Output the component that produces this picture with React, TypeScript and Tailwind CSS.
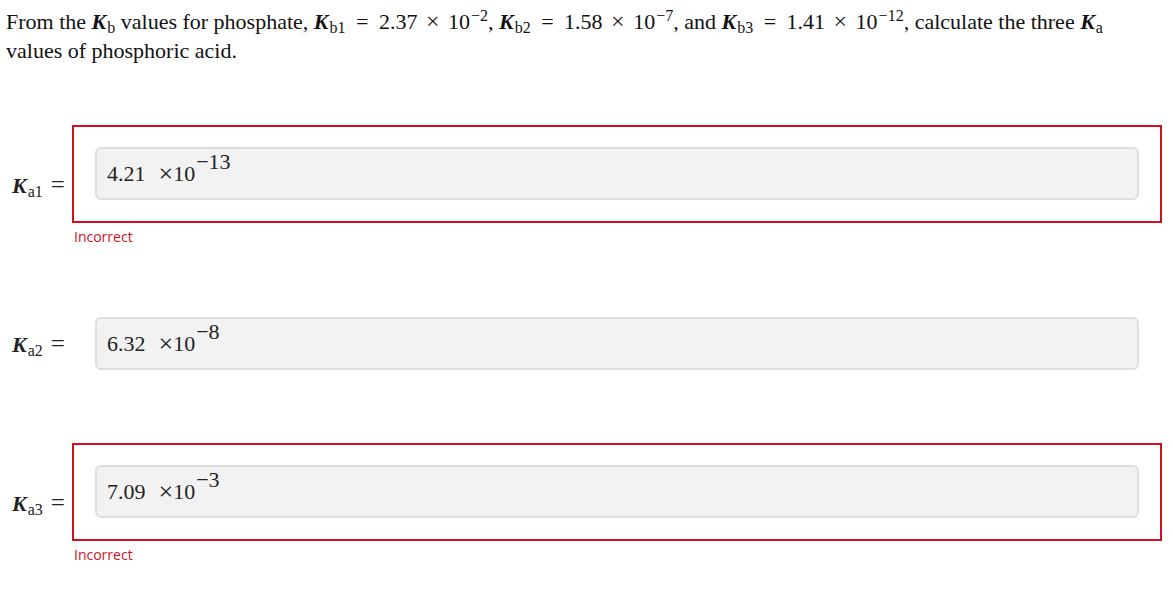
import React from 'react';

const serif = { fontFamily: '"Liberation Serif", "Times New Roman", serif' };

const K = ({ sub }: { sub: string }) => (
  <span className="whitespace-nowrap">
    <span className="font-bold italic">K</span>
    <sub className="ml-[1px] text-[16px]">{sub}</sub>
  </span>
);

const Eq = () => <span className="mx-[5px]">=</span>;
const Times = () => <span className="mx-[3px] text-[24px] leading-none">×</span>;

const Answer: React.FC<{ label: string; value: string; exp: string; wrong?: boolean }> = ({ label, value, exp, wrong }) => (
  <div className="flex items-center">
    <div className="w-[72px] shrink-0 pl-[12px] text-[22px] text-[#222]" style={serif}>
      <K sub={label} />
      <span className="ml-[8px] text-[25px] leading-none">=</span>
    </div>
    <div className="mr-[11px] flex-1">
      <div className={`border-2 px-[21px] pt-[20px] pb-[21px] ${wrong ? 'border-[#d0101e]' : 'border-transparent'}`}>
        <div className="flex h-[53px] items-center rounded-md border-2 border-[#dedede] bg-[#f2f2f2] pl-[10px] text-[22px] text-[#222]" style={serif}>
          <span>{value}</span>
          <span className="ml-[13px] text-[26px] leading-none">×</span>
          <span>10</span>
          <span className="relative -top-[12px] ml-[1px]">−{exp}</span>
        </div>
      </div>
      {wrong && (
        <div className="ml-[2px] mt-[5px] text-[14px] leading-[18px] text-[#d0101e]" style={{ fontFamily: '"Open Sans", sans-serif' }}>
          Incorrect
        </div>
      )}
    </div>
  </div>
);

export default function App() {
  return (
    <div className="min-h-screen bg-white">
      <p className="px-[6px] pt-[7px] text-[22px] leading-[29px] text-[#111]" style={serif}>
        From the <K sub="b" /> values for phosphate, <K sub="b1" /> <Eq /> 2.37 <Times /> 10
        <sup className="ml-[1px] text-[16px]">−2</sup>, <K sub="b2" /> <Eq /> 1.58 <Times /> 10
        <sup className="ml-[1px] text-[16px]">−7</sup>, and <K sub="b3" /> <Eq /> 1.41 <Times /> 10
        <sup className="ml-[1px] text-[16px]">−12</sup>, calculate the three <K sub="a" />
        <br />
        values of phosphoric acid.
      </p>

      <div className="mt-[60px]">
        <Answer label="a1" value="4.21" exp="13" wrong />
      </div>
      <div className="mt-[49px]">
        <Answer label="a2" value="6.32" exp="8" />
      </div>
      <div className="mt-[50px]">
        <Answer label="a3" value="7.09" exp="3" wrong />
      </div>
    </div>
  );
}
